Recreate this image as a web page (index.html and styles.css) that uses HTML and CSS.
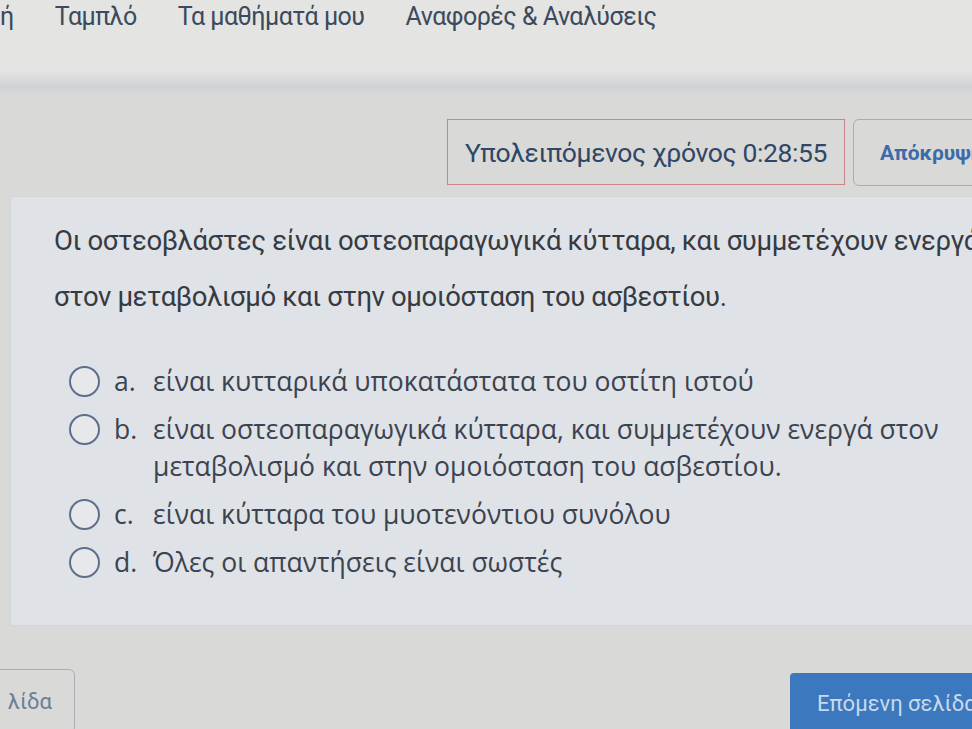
FILE: index.html
```html
<!DOCTYPE html>
<html lang="el">
<head>
    <meta charset="UTF-8">
    <meta name="viewport" content="width=device-width, initial-scale=1.0">
    <title>Κουίζ</title>
    <link rel="stylesheet" href="styles.css">
</head>
<body>
    <nav class="topnav">
        <a href="#" class="nav-link">ή</a>
        <a href="#" class="nav-link">Ταμπλό</a>
        <a href="#" class="nav-link">Τα μαθήματά μου</a>
        <a href="#" class="nav-link">Αναφορές &amp; Αναλύσεις</a>
    </nav>
    <div class="nav-shadow"></div>

    <div class="page">
        <div class="timer-row">
            <div class="timer">Υπολειπόμενος χρόνος 0:28:55</div>
            <button class="btn-hide">Απόκρυψη</button>
        </div>

        <div class="question">
            <p class="qtext">Οι οστεοβλάστες είναι οστεοπαραγωγικά κύτταρα, και συμμετέχουν ενεργά στον μεταβολισμό και στην ομοιόσταση του ασβεστίου.</p>

            <div class="answers">
                <label class="answer">
                    <span class="radio"></span>
                    <span class="letter">a.</span>
                    <span class="atext">είναι κυτταρικά υποκατάστατα του οστίτη ιστού</span>
                </label>
                <label class="answer">
                    <span class="radio"></span>
                    <span class="letter">b.</span>
                    <span class="atext">είναι οστεοπαραγωγικά κύτταρα, και συμμετέχουν ενεργά στον μεταβολισμό και στην ομοιόσταση του ασβεστίου.</span>
                </label>
                <label class="answer">
                    <span class="radio"></span>
                    <span class="letter">c.</span>
                    <span class="atext">είναι κύτταρα του μυοτενόντιου συνόλου</span>
                </label>
                <label class="answer">
                    <span class="radio"></span>
                    <span class="letter">d.</span>
                    <span class="atext">Όλες οι απαντήσεις είναι σωστές</span>
                </label>
            </div>
        </div>

        <div class="page-nav">
            <button class="btn-prev">λίδα</button>
            <button class="btn-next">Επόμενη σελίδα</button>
        </div>
    </div>
</body>
</html>
```

FILE: styles.css
```css
html, body {
    margin: 0;
    padding: 0;
    overflow: hidden;
}
body {
    width: 972px;
    height: 729px;
    background-color: #d9d9d8;
    font-family: Roboto, "Open Sans", sans-serif;
    color: #3a3f47;
}
.topnav {
    display: flex;
    gap: 41px;
    height: 72px;
    padding: 2px 0 0 0;
    background-color: #e4e4e2;
    box-sizing: border-box;
}
.nav-link {
    font-size: 25px;
    color: #3b4a5c;
    text-decoration: none;
    letter-spacing: -0.5px;
}
.nav-shadow {
    height: 24px;
    background: linear-gradient(#e2e2e0, #cfd2d6 60%, #d9d9d8);
}
.page {
    width: 1013px;
    margin-left: 10px;
}
.timer-row {
    display: flex;
    justify-content: flex-end;
    gap: 8px;
    margin-top: 23px;
}
.timer {
    width: 398px;
    height: 66px;
    box-sizing: border-box;
    border: 1px solid #c8868a;
    display: flex;
    align-items: center;
    justify-content: center;
    font-size: 26.5px;
    color: #2f4766;
    letter-spacing: -0.4px;
}
.btn-hide {
    width: 170px;
    height: 67px;
    border: 1px solid #a9adb3;
    border-radius: 6px;
    background: transparent;
    text-align: left;
    padding-left: 26px;
    font-family: Roboto, sans-serif;
    font-size: 21px;
    font-weight: bold;
    color: #3d6aa8;
}
.question {
    margin-top: 10px;
    height: 430px;
    box-sizing: border-box;
    background-color: #dfe2e6;
    border: 1px solid #d2d5d9;
    border-radius: 2px;
    padding: 16px 0 0 43px;
}
.qtext {
    margin: 0;
    width: 960px;
    font-size: 27.5px;
    line-height: 56px;
    letter-spacing: -0.4px;
    color: #363a42;
}
.answers {
    margin-top: 38px;
    padding-left: 15px;
}
.answer {
    display: flex;
    align-items: flex-start;
    padding-bottom: 11px;
    font-family: "Open Sans", sans-serif;
    font-size: 26.5px;
    line-height: 37px;
    color: #3c4350;
}
.radio {
    flex: none;
    width: 27px;
    height: 27px;
    margin-top: 3px;
    border: 2px solid #5c6f8c;
    border-radius: 50%;
    background: #e6e8eb;
}
.letter {
    flex: none;
    width: 39px;
    margin-left: 14px;
}
.atext {
    width: 820px;
}
.page-nav {
    display: flex;
    justify-content: space-between;
    margin-top: 43px;
    margin-left: -130px;
}
.btn-prev {
    width: 195px;
    height: 64px;
    border: 1px solid #a9adb3;
    border-radius: 6px;
    background: transparent;
    text-align: right;
    padding-right: 22px;
    font-family: Roboto, sans-serif;
    font-size: 22px;
    color: #6a7f99;
}
.btn-next {
    width: 233px;
    height: 60px;
    margin-top: 4px;
    border: none;
    border-radius: 4px 4px 0 0;
    background-color: #3c78be;
    text-align: left;
    padding-left: 27px;
    font-family: Roboto, sans-serif;
    font-size: 22px;
    color: #c9d9ec;
    white-space: nowrap;
}
```
